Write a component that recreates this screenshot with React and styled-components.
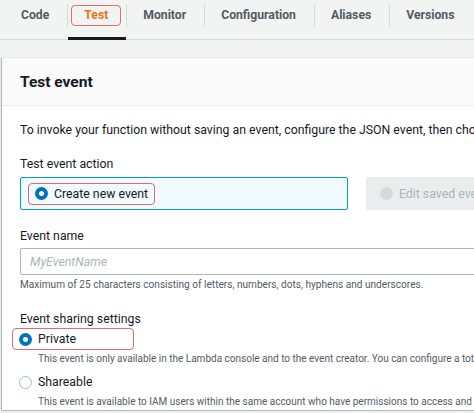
import React from 'react'
import styled, { createGlobalStyle } from 'styled-components'

const GlobalStyle = createGlobalStyle`
  html, body {
    margin: 0;
    padding: 0;
    background: #f2f3f3;
    overflow: hidden;
    font-family: Roboto, "Liberation Sans", Arial, sans-serif;
    color: #16191f;
  }
`

const Page = styled.div`
  width: 474px;
  height: 413px;
  overflow: hidden;
`

const TabBar = styled.div`
  display: flex;
  align-items: stretch;
  height: 39px;
  padding-left: 3px;
  border-bottom: 1px solid #d5dbdb;
  width: 700px;
`

const Tab = styled.div`
  position: relative;
  display: flex;
  align-items: flex-start;
  padding: 7px 18px 0 17px;
  font-size: 12.2px;
  font-weight: 700;
  color: ${p => (p.active ? '#ec7211' : '#545b64')};

  &:first-child {
    padding-left: 18px;
  }

  &::before {
    content: '';
    display: ${p => (p.first ? 'none' : 'block')};
    position: absolute;
    left: 0;
    top: 4px;
    height: 23px;
    width: 1px;
    background: #d5dbdb;
  }

  ${p =>
    p.active &&
    `
    &::after {
      content: '';
      position: absolute;
      left: 1px;
      right: 0;
      bottom: -1px;
      height: 3px;
      background: #16191f;
    }
  `}
`

const Outline = styled.span`
  display: inline-flex;
  align-items: center;
  border: 1px solid #e06c6c;
  border-radius: 4px;
`

const TabLabel = styled(Outline)`
  margin: -2px -13px 0;
  padding: 2px 12px 3px;
  border-color: ${p => (p.active ? '#e06c6c' : 'transparent')};
`

const Gap = styled.div`
  height: 18px;
`

const Card = styled.div`
  margin-left: 2px;
  width: 700px;
  background: #fff;
  box-shadow: -1px 0 1px rgba(0, 28, 36, 0.25), 0 1px 1px rgba(0, 28, 36, 0.2);
`

const CardHeader = styled.div`
  background: #fafafa;
  border-bottom: 1px solid #eaeded;
  height: 47px;
  display: flex;
  align-items: center;
  padding: 0 18px;
  font-size: 15.5px;
  font-weight: 700;
`

const CardBody = styled.div`
  padding: 15px 18px 0;
  font-size: 12.3px;
`

const Intro = styled.p`
  margin: 0 0 16px;
  line-height: 18px;
  white-space: nowrap;
`

const Label = styled.div`
  line-height: 18px;
  margin-bottom: 4px;
`

const TileRow = styled.div`
  display: flex;
  gap: 18px;
  margin-bottom: 17px;
`

const Tile = styled.div`
  box-sizing: border-box;
  width: ${p => p.width}px;
  height: 33px;
  display: flex;
  align-items: center;
  border-radius: 2px;
  border: 1px solid ${p => (p.disabled ? '#eaeded' : '#00a1c9')};
  background: ${p => (p.disabled ? '#eaeded' : '#f1faff')};
  color: ${p => (p.disabled ? '#aab7b8' : '#16191f')};
  padding-left: ${p => (p.disabled ? '6px' : '7px')};
  white-space: nowrap;
`

const RadioBox = styled(Outline)`
  height: 22px;
  padding: 0 6px;
  gap: 6px;
  border-color: ${p => (p.marked ? '#e06c6c' : 'transparent')};
  width: ${p => (p.width ? `${p.width}px` : 'auto')};
  box-sizing: border-box;
`

const Radio = styled.span`
  box-sizing: border-box;
  width: 13px;
  height: 13px;
  border-radius: 50%;
  flex: none;
  background: ${p => (p.disabled ? '#d5dbdb' : '#fff')};
  border: ${p =>
    p.checked ? '4px solid #0073bb' : p.disabled ? '1px solid #d5dbdb' : '1px solid #aab7b8'};
`

const Input = styled.div`
  box-sizing: border-box;
  height: 27px;
  border: 1px solid #aab7b8;
  border-radius: 2px;
  display: flex;
  align-items: center;
  padding-left: 9px;
  font-style: italic;
  color: #aab7b8;
  margin-top: -1px;
`

const Hint = styled.div`
  font-size: 10.1px;
  color: #545b64;
  line-height: 16px;
  margin: 2px 0 17px;
  white-space: nowrap;
`

const Option = styled.div`
  margin-left: -8px;
  margin-top: ${p => p.top}px;
`

const OptionText = styled.div`
  font-size: 10px;
  color: #545b64;
  line-height: 16px;
  margin: 1px 0 0 26px;
  white-space: nowrap;
`

export default function App() {
  const tabs = ['Code', 'Test', 'Monitor', 'Configuration', 'Aliases', 'Versions']
  return (
    <Page>
      <GlobalStyle />
      <TabBar>
        {tabs.map((t, i) => (
          <Tab key={t} first={i === 0} active={t === 'Test'}>
            <TabLabel active={t === 'Test'}>{t}</TabLabel>
          </Tab>
        ))}
      </TabBar>
      <Gap />
      <Card>
        <CardHeader>Test event</CardHeader>
        <CardBody>
          <Intro>
            To invoke your function without saving an event, configure the JSON event, then choose Test.
          </Intro>
          <Label>Test event action</Label>
          <TileRow>
            <Tile width={328}>
              <RadioBox marked>
                <Radio checked />
                Create new event
              </RadioBox>
            </Tile>
            <Tile width={300} disabled>
              <RadioBox>
                <Radio disabled />
                Edit saved event
              </RadioBox>
            </Tile>
          </TileRow>
          <Label>Event name</Label>
          <Input>MyEventName</Input>
          <Hint>Maximum of 25 characters consisting of letters, numbers, dots, hyphens and underscores.</Hint>
          <Label>Event sharing settings</Label>
          <Option top={-4}>
            <RadioBox marked width={122}>
              <Radio checked />
              Private
            </RadioBox>
            <OptionText>
              This event is only available in the Lambda console and to the event creator. You can configure a total of 10.
            </OptionText>
          </Option>
          <Option top={4}>
            <RadioBox>
              <Radio />
              Shareable
            </RadioBox>
            <OptionText>
              This event is available to IAM users within the same account who have permissions to access and use shareable events.
            </OptionText>
          </Option>
        </CardBody>
      </Card>
    </Page>
  )
}
